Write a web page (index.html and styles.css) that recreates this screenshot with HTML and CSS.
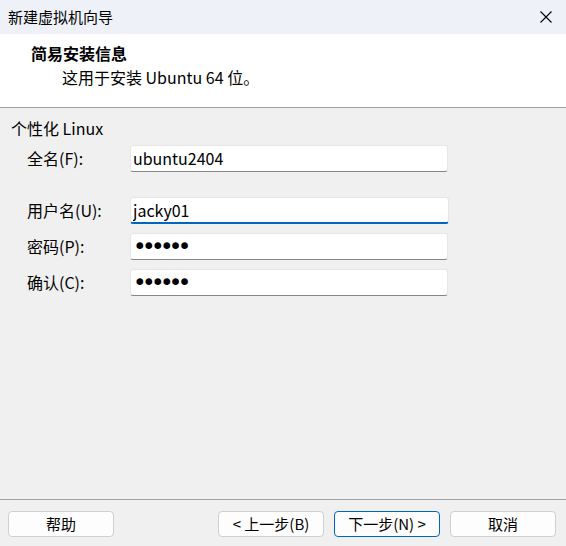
FILE: index.html
```
<!DOCTYPE html>
<html lang="zh-CN">
<head>
<meta charset="utf-8">
<title>新建虚拟机向导</title>
<link rel="stylesheet" href="styles.css">
</head>
<body>
<div class="window">
  <div class="titlebar">
    <span class="title">新建虚拟机向导</span>
    <svg class="close" width="12" height="12" viewBox="0 0 12 12" aria-label="关闭">
      <path d="M0.5 0.5 L11.5 11.5 M11.5 0.5 L0.5 11.5" stroke="#000" stroke-width="1.1" fill="none"/>
    </svg>
  </div>
  <div class="header">
    <div class="h-title">简易安装信息</div>
    <div class="h-sub">这用于安装 Ubuntu 64 位。</div>
  </div>
  <div class="content">
    <div class="group">个性化 Linux</div>
    <div class="row r1">
      <label class="lbl" for="fn">全名(F):</label>
      <input class="field" id="fn" type="text" value="ubuntu2404">
    </div>
    <div class="row r2">
      <label class="lbl" for="un">用户名(U):</label>
      <input class="field focused" id="un" type="text" value="jacky01">
    </div>
    <div class="row r3">
      <label class="lbl" for="pw">密码(P):</label>
      <input class="field pw" id="pw" type="password" value="123456">
    </div>
    <div class="row r3">
      <label class="lbl" for="pw2">确认(C):</label>
      <input class="field pw" id="pw2" type="password" value="123456">
    </div>
  </div>
  <div class="footer">
    <button class="btn">帮助</button>
    <div class="spacer"></div>
    <button class="btn">&lt; 上一步(B)</button>
    <button class="btn primary">下一步(N) &gt;</button>
    <button class="btn">取消</button>
  </div>
</div>
</body>
</html>
```
FILE: styles.css
```
* { box-sizing: border-box; }
html, body { margin: 0; padding: 0; }
body {
  width: 566px;
  height: 546px;
  overflow: hidden;
  font-family: "Noto Sans CJK SC", "Noto Sans", sans-serif;
  color: #000;
  background: #f0f0f0;
}
.window {
  width: 566px;
  height: 546px;
  display: flex;
  flex-direction: column;
}
.titlebar {
  height: 34px;
  flex: none;
  background: #eef2f8;
  display: flex;
  align-items: center;
  justify-content: space-between;
  padding: 0 14px 1px 8px;
}
.title {
  font-size: 15px;
  line-height: 20px;
}
.close { display: block; margin-top: 1px; }
.header {
  height: 74px;
  flex: none;
  background: #fff;
  border-bottom: 1px solid #a0a0a0;
  padding-top: 9px;
}
.h-title {
  font-size: 16px;
  font-weight: 700;
  line-height: 20px;
  padding-left: 31px;
}
.h-sub {
  font-size: 16px;
  line-height: 20px;
  margin-top: 4px;
  padding-left: 62px;
}
.content {
  flex: 1;
  background: #f0f0f0;
  padding: 10px 0 0 11px;
}
.group {
  font-size: 16px;
  line-height: 20px;
}
.row {
  display: flex;
  align-items: center;
  margin-left: 16px;
}
.r1 { margin-top: 7px; }
.r2 { margin-top: 25px; }
.r3 { margin-top: 9px; }
.lbl {
  width: 103px;
  font-size: 16px;
  line-height: 20px;
  padding-bottom: 2px;
}
.field {
  width: 318px;
  height: 27px;
  margin: 0;
  border: 1px solid #e6e6e6;
  border-bottom: 1px solid #868686;
  border-radius: 3px;
  background: #fff;
  font-family: "Noto Sans CJK SC", "Noto Sans", sans-serif;
  font-size: 16px;
  color: #000;
  padding: 0 0 1px 2px;
  outline: none;
}
.field.focused {
  border-bottom: 2px solid #0067c0;
  width: 319px;
  padding-bottom: 0;
}
.field.pw {
  font-family: "DejaVu Sans", sans-serif;
  font-size: 23px;
  letter-spacing: -4.6px;
  padding: 0 0 1px 2px;
}
.footer {
  height: 47px;
  flex: none;
  border-top: 1px solid #a0a0a0;
  background: #f0f0f0;
  display: flex;
  align-items: flex-start;
  padding: 11px 10px 0 8px;
  gap: 10px;
}
.spacer { flex: 1; }
.btn {
  width: 106px;
  height: 26px;
  margin: 0;
  padding: 0 0 1px 0;
  border: 1px solid #d0d0d0;
  border-radius: 4px;
  background: #fdfdfd;
  font-family: "Noto Sans CJK SC", "Noto Sans", sans-serif;
  font-size: 15px;
  line-height: 20px;
  color: #000;
}
.btn.primary { border-color: #0067c0; }
```
